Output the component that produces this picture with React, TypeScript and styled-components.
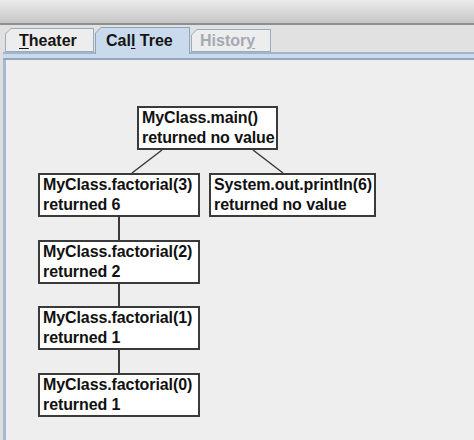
import styled, { createGlobalStyle } from "styled-components";

const GlobalStyle = createGlobalStyle`
  html, body {
    margin: 0;
    padding: 0;
    background: #dedede;
  }
  body {
    font-family: "Liberation Sans", Arial, sans-serif;
  }
`;

const Frame = styled.div`
  width: 474px;
  height: 440px;
  overflow: hidden;
  display: flex;
  flex-direction: column;
  background: #dedede;
`;

const TitleBar = styled.div`
  height: 23px;
  flex: none;
  background: linear-gradient(#ececec, #dcdcdc 40%, #c5c5c5);
  border-bottom: 2px solid #8f8f8f;
`;

const TabRow = styled.div`
  height: 27px;
  flex: none;
  display: flex;
  align-items: flex-end;
  padding-left: 5px;
  background: #e1e1e1;
  position: relative;
  z-index: 1;
`;

const Tab = styled.div<{ $width: number; $height: number; $selected?: boolean }>`
  width: ${(p) => p.$width}px;
  height: ${(p) => p.$height}px;
  margin-bottom: ${(p) => (p.$selected ? -2 : 0)}px;
  margin-right: 1px;
  padding: 1px 1px ${(p) => (p.$selected ? 0 : 1)}px 1px;
  box-sizing: border-box;
  background: ${(p) => (p.$selected ? "#8ea3ba" : "#9aabbd")};
  clip-path: polygon(6px 0, 100% 0, 100% 100%, 0 100%, 0 6px);
  flex: none;
`;

const TabFace = styled.div<{ $selected?: boolean; $indent: number; $top: number; $disabled?: boolean }>`
  height: 100%;
  box-sizing: border-box;
  padding-left: ${(p) => p.$indent}px;
  padding-top: ${(p) => p.$top}px;
  background: ${(p) => (p.$selected ? "#c8daec" : "#ededed")};
  clip-path: polygon(5px 0, 100% 0, 100% 100%, 0 100%, 0 5px);
  font-size: 16px;
  font-weight: bold;
  line-height: 18px;
  color: ${(p) => (p.$disabled ? "#a4aab2" : "#151515")};
  white-space: nowrap;

  u {
    text-decoration-thickness: 1px;
    text-underline-offset: 2px;
  }
`;

const Strip = styled.div`
  height: 4px;
  flex: none;
  margin-left: 3px;
  background: #c8daec;
  border-top: 2px solid #a1b5ca;
  border-bottom: 2px solid #93a8be;
`;

const Panel = styled.div`
  flex: 1;
  margin-left: 3px;
  border-left: 3px solid #a7b9ce;
  background: #eeeeee;
  position: relative;
`;

const Canvas = styled.div`
  position: relative;
  width: 100%;
  height: 100%;
`;

const Edges = styled.svg`
  position: absolute;
  left: 0;
  top: 0;
  width: 100%;
  height: 100%;
`;

const Node = styled.div`
  position: absolute;
  height: 44px;
  box-sizing: border-box;
  border: 2px solid #3a3a3a;
  background: #ffffff;
  padding: 0 0 0 3px;
  font-size: 16px;
  font-weight: bold;
  line-height: 20px;
  color: #111111;
  white-space: nowrap;
  letter-spacing: -0.1px;
`;

type TreeNode = { id: string; call: string; result: string; x: number; y: number; w: number };

const nodes: TreeNode[] = [
  { id: "main", call: "MyClass.main()", result: "returned no value", x: 131, y: 46, w: 141 },
  { id: "f3", call: "MyClass.factorial(3)", result: "returned 6", x: 32, y: 113, w: 162 },
  { id: "out", call: "System.out.println(6)", result: "returned no value", x: 203, y: 113, w: 167 },
  { id: "f2", call: "MyClass.factorial(2)", result: "returned 2", x: 32, y: 180, w: 162 },
  { id: "f1", call: "MyClass.factorial(1)", result: "returned 1", x: 32, y: 246, w: 162 },
  { id: "f0", call: "MyClass.factorial(0)", result: "returned 1", x: 32, y: 313, w: 162 },
];

const edges = [
  [156, 90, 126, 113],
  [247, 90, 277, 113],
  [113, 157, 113, 180],
  [113, 224, 113, 246],
  [113, 290, 113, 313],
];

const App = () => (
  <Frame>
    <GlobalStyle />
    <TitleBar />
    <TabRow>
      <Tab $width={89} $height={24}>
        <TabFace $indent={13} $top={3}>
          <u>T</u>heater
        </TabFace>
      </Tab>
      <Tab $width={95} $height={27} $selected>
        <TabFace $indent={10} $top={4} $selected>
          Cal<u>l</u> Tree
        </TabFace>
      </Tab>
      <Tab $width={80} $height={23}>
        <TabFace $indent={8} $top={2} $disabled>
          Histor<u>y</u>
        </TabFace>
      </Tab>
    </TabRow>
    <Strip />
    <Panel>
      <Canvas>
        <Edges>
          {edges.map(([x1, y1, x2, y2], i) => (
            <line
              key={i}
              x1={x1}
              y1={y1}
              x2={x2}
              y2={y2}
              stroke="#3a3a3a"
              strokeWidth={x1 === x2 ? 2 : 1.5}
            />
          ))}
        </Edges>
        {nodes.map((n) => (
          <Node key={n.id} style={{ left: n.x, top: n.y, width: n.w }}>
            <div>{n.call}</div>
            <div>{n.result}</div>
          </Node>
        ))}
      </Canvas>
    </Panel>
  </Frame>
);

export default App;
